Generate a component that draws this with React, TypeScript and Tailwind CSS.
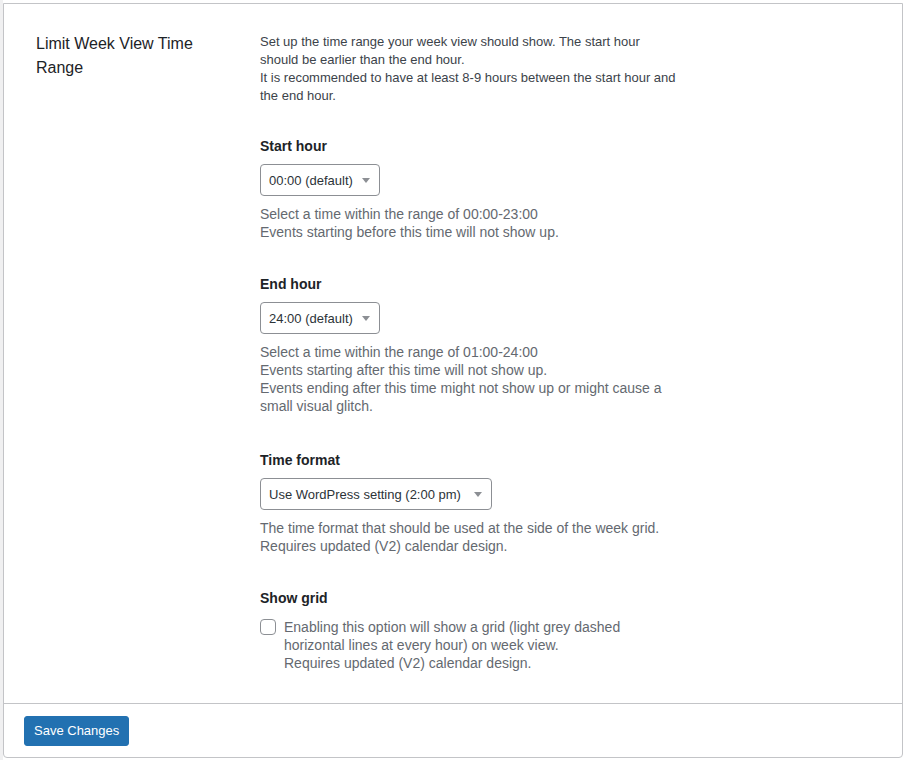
import React from "react";

function Select({ label, width }: { label: string; width: string }) {
  return (
    <div
      className={`${width} h-[32px] border border-[#8c8f94] rounded-[4px] bg-white flex items-center justify-between pl-[8px] pr-[8px] text-[13px] text-[#2c3338]`}
    >
      <span className="leading-[18px] mt-[2px]">{label}</span>
      <svg width="8" height="5" viewBox="0 0 8 5" className="mr-[1px]">
        <path d="M0 0 L8 0 L4 5 Z" fill="#8c8f94" />
      </svg>
    </div>
  );
}

function Heading({ children, className = "" }: { children: React.ReactNode; className?: string }) {
  return (
    <div className={`text-[14px] leading-[20px] font-bold text-[#1d2327] ${className}`}>{children}</div>
  );
}

function Help({ lines }: { lines: string[] }) {
  return (
    <div className="text-[14px] leading-[18px] text-[#646970] mt-[9px]">
      {lines.map((l, i) => (
        <div key={i}>{l}</div>
      ))}
    </div>
  );
}

export default function App() {
  return (
    <div className="min-h-[760px] bg-white flex font-['Liberation_Sans',Arial,sans-serif]">
      <div className="w-[3px] bg-[#f0f0f1] shrink-0" />
      <div className="pt-[3px]">
        <div className="w-[900px] border border-[#c3c4c7] rounded-b-[4px] bg-white">
          <div className="flex pl-[32px] pt-[27px] pb-[31px]">
            <div className="w-[200px] mr-[24px] mt-[1px] text-[16px] leading-[24px] text-[#1d2327] shrink-0">
              Limit Week View Time Range
            </div>
            <div className="w-[420px] mt-[2px]">
              <div className="text-[13px] leading-[18px] text-[#3c434a]">
                Set up the time range your week view should show. The start hour should be earlier than the end hour.
                <br />
                It is recommended to have at least 8-9 hours between the start hour and the end hour.
              </div>

              <Heading className="mt-[31px]">Start hour</Heading>
              <div className="mt-[8px]">
                <Select label="00:00 (default)" width="w-[120px]" />
              </div>
              <Help
                lines={[
                  "Select a time within the range of 00:00-23:00",
                  "Events starting before this time will not show up.",
                ]}
              />

              <Heading className="mt-[33px]">End hour</Heading>
              <div className="mt-[8px]">
                <Select label="24:00 (default)" width="w-[120px]" />
              </div>
              <div className="text-[14px] leading-[18px] text-[#646970] mt-[9px]">
                Select a time within the range of 01:00-24:00
                <br />
                Events starting after this time will not show up.
                <br />
                Events ending after this time might not show up or might cause a small visual glitch.
              </div>

              <Heading className="mt-[35px]">Time format</Heading>
              <div className="mt-[8px]">
                <Select label="Use WordPress setting (2:00 pm)" width="w-[232px]" />
              </div>
              <Help
                lines={[
                  "The time format that should be used at the side of the week grid.",
                  "Requires updated (V2) calendar design.",
                ]}
              />

              <Heading className="mt-[33px]">Show grid</Heading>
              <div className="flex gap-[8px] mt-[10px]">
                <div className="w-[16px] h-[16px] border border-[#8c8f94] rounded-[4px] bg-white shrink-0 mt-[1px]" />
                <div className="text-[14px] leading-[18px] text-[#646970]">
                  Enabling this option will show a grid (light grey dashed horizontal lines at every hour) on week view.
                  <br />
                  Requires updated (V2) calendar design.
                </div>
              </div>
            </div>
          </div>
          <div className="border-t border-[#c3c4c7] pl-[20px] pt-[12px] pb-[11px]">
            <button className="h-[30px] px-[9px] bg-[#2271b1] text-white text-[13px] leading-[28px] rounded-[3px] border border-[#2271b1]">
              Save Changes
            </button>
          </div>
        </div>
      </div>
    </div>
  );
}
